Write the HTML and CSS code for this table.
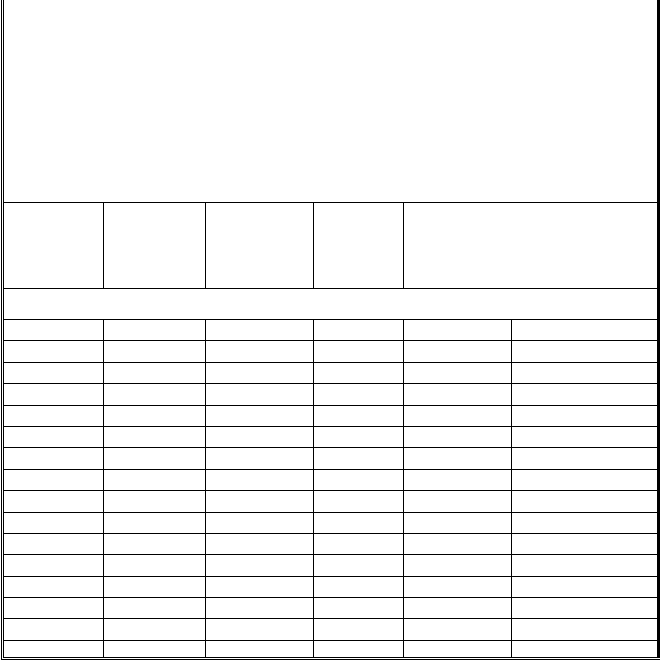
FILE: index.html
```html
<!DOCTYPE html>
<html lang="en">
<head>
<meta charset="utf-8">
<title>Table</title>
<link rel="stylesheet" href="styles.css">
</head>
<body>
<div class="frame">
  <div class="sheet">
    <div class="cell span-all"></div>
    <div class="cell"></div><div class="cell"></div><div class="cell"></div><div class="cell"></div><div class="cell span-2"></div>
    <div class="cell span-all"></div>
    <div class="cell"></div><div class="cell"></div><div class="cell"></div><div class="cell"></div><div class="cell"></div><div class="cell"></div>
    <div class="cell"></div><div class="cell"></div><div class="cell"></div><div class="cell"></div><div class="cell"></div><div class="cell"></div>
    <div class="cell"></div><div class="cell"></div><div class="cell"></div><div class="cell"></div><div class="cell"></div><div class="cell"></div>
    <div class="cell"></div><div class="cell"></div><div class="cell"></div><div class="cell"></div><div class="cell"></div><div class="cell"></div>
    <div class="cell"></div><div class="cell"></div><div class="cell"></div><div class="cell"></div><div class="cell"></div><div class="cell"></div>
    <div class="cell"></div><div class="cell"></div><div class="cell"></div><div class="cell"></div><div class="cell"></div><div class="cell"></div>
    <div class="cell"></div><div class="cell"></div><div class="cell"></div><div class="cell"></div><div class="cell"></div><div class="cell"></div>
    <div class="cell"></div><div class="cell"></div><div class="cell"></div><div class="cell"></div><div class="cell"></div><div class="cell"></div>
    <div class="cell"></div><div class="cell"></div><div class="cell"></div><div class="cell"></div><div class="cell"></div><div class="cell"></div>
    <div class="cell"></div><div class="cell"></div><div class="cell"></div><div class="cell"></div><div class="cell"></div><div class="cell"></div>
    <div class="cell"></div><div class="cell"></div><div class="cell"></div><div class="cell"></div><div class="cell"></div><div class="cell"></div>
    <div class="cell"></div><div class="cell"></div><div class="cell"></div><div class="cell"></div><div class="cell"></div><div class="cell"></div>
    <div class="cell"></div><div class="cell"></div><div class="cell"></div><div class="cell"></div><div class="cell"></div><div class="cell"></div>
    <div class="cell"></div><div class="cell"></div><div class="cell"></div><div class="cell"></div><div class="cell"></div><div class="cell"></div>
    <div class="cell"></div><div class="cell"></div><div class="cell"></div><div class="cell"></div><div class="cell"></div><div class="cell"></div>
    <div class="cell"></div><div class="cell"></div><div class="cell"></div><div class="cell"></div><div class="cell"></div><div class="cell"></div>
  </div>
</div>
</body>
</html>
```

FILE: styles.css
```css
html, body {
  margin: 0;
  padding: 0;
  background: #fff;
  font-family: "Liberation Serif", serif;
}

.frame {
  margin-left: 1px;
  width: 657px;
  border: 1px solid #000;
  border-top: none;
  padding: 0 1px 1px 1px;
}

.sheet {
  display: grid;
  grid-template-columns: 99px 101px 107px 89px 107px 145px;
  grid-template-rows: 202px 85px 30px repeat(15, 20.4px) 16px;
  gap: 1px;
  background: #000;
  border: 1px solid #000;
  border-top: none;
}

.cell {
  background: #fff;
}

.span-all {
  grid-column: 1 / -1;
}

.span-2 {
  grid-column: span 2;
}
```
